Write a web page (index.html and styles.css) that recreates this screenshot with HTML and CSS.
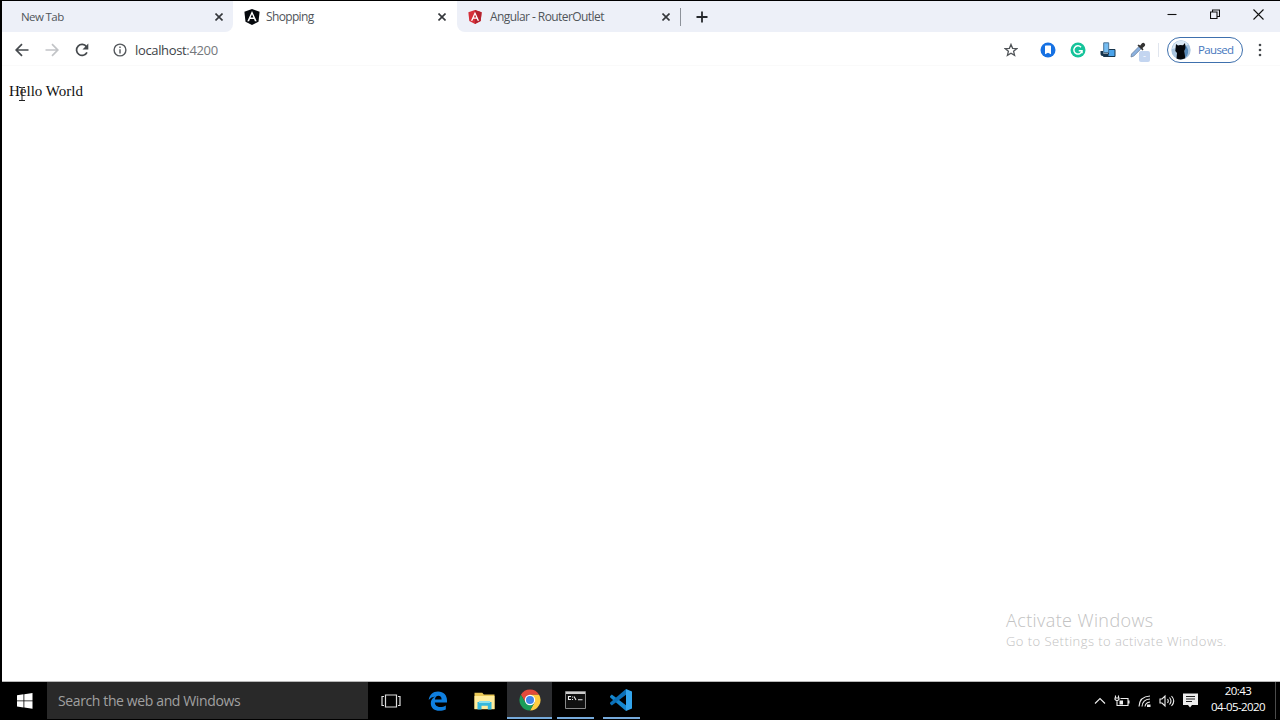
FILE: index.html
```
<!DOCTYPE html>
<html lang="en">
<head>
    <meta charset="UTF-8">
    <meta name="viewport" content="width=device-width, initial-scale=1.0">
    <title>Shopping</title>
    <link rel="stylesheet" href="styles.css">
</head>
<body>
    <div class="browser">
        <div class="tabs">
            <div class="tab tab-first">
                <span class="tab-title title-new">New Tab</span>
                <svg class="close" viewBox="0 0 8 8"><path d="M0.5 0.5l7 7M7.5 0.5l-7 7"/></svg>
            </div>
            <div class="tab tab-active">
                <svg class="favicon" viewBox="0 0 16 16">
                    <path fill="#05080c" d="M8 0l7.600 2.700-1.100 10L8 16l-6.500-3.300L0.400 2.700z"/>
                    <path fill="#fff" fill-rule="evenodd" d="M8 1.900L3.300 12.300h1.800l0.900-2.300h4l0.900 2.300h1.800zM8 5.200l1.400 3.300H6.600z"/>
                </svg>
                <span class="tab-title title-shopping">Shopping</span>
                <svg class="close" viewBox="0 0 8 8"><path d="M0.5 0.5l7 7M7.5 0.5l-7 7"/></svg>
            </div>
            <div class="tab tab-last">
                <svg class="favicon favicon-red" viewBox="0 0 16 16">
                    <path fill="#d6303a" d="M8 0l7.600 2.700-1.100 10L8 16l-6.500-3.300L0.400 2.700z"/>
                    <path fill="#b3232f" d="M8 0l7.600 2.700-1.100 10L8 16z"/>
                    <path fill="#fff" fill-rule="evenodd" d="M8 1.900L3.300 12.300h1.800l0.900-2.300h4l0.900 2.300h1.800zM8 5.200l1.400 3.300H6.600z"/>
                </svg>
                <span class="tab-title title-angular">Angular - RouterOutlet</span>
                <svg class="close" viewBox="0 0 8 8"><path d="M0.5 0.5l7 7M7.5 0.5l-7 7"/></svg>
            </div>
            <div class="tab-divider"></div>
            <svg class="new-tab" viewBox="0 0 12 12"><path d="M6 0.500v11M0.500 6h11"/></svg>
            <div class="window-buttons">
                <svg width="10" height="11" viewBox="0 0 10 11"><path d="M0.500 5.500h9"/></svg>
                <svg width="10" height="11" viewBox="0 0 10 11"><path d="M0.500 3h6.500v6.500h-6.500zM2.500 3V1h7v6.500H7"/></svg>
                <svg width="11" height="11" viewBox="0 0 11 11"><path d="M0.500 0.500l10 10M10.500 0.500l-10 10"/></svg>
            </div>
        </div>

        <div class="toolbar">
            <svg class="nav-icon" viewBox="0 0 14 14"><path d="M13.500 7H1.500M7 1.200L1.200 7 7 12.800"/></svg>
            <svg class="nav-icon disabled" viewBox="0 0 14 14"><path d="M0.500 7h12M7 1.200L12.800 7 7 12.800"/></svg>
            <svg class="nav-icon" viewBox="0 0 14 14">
                <path d="M12 9.300A5.500 5.500 0 1 1 11.500 3.700"/>
                <path class="solid" d="M13.300 0.500v6H7.500z"/>
            </svg>
            <svg class="info" viewBox="0 0 14 14"><circle cx="7" cy="7" r="5.900"/><path d="M7 6.200v4.200M7 3.500v1.500"/></svg>
            <span class="url">localhost<span class="port">:4200</span></span>

            <div class="extensions">
                <svg class="star" viewBox="0 0 14 14"><path d="M7 1.400l1.600 3.900 4.200 0.300-3.200 2.700 1 4.100L7 10.200l-3.600 2.200 1-4.100L1.200 5.600l4.200-0.300z"/></svg>
                <svg width="16" height="16" viewBox="0 0 16 16">
                    <circle cx="8" cy="8" r="7.500" fill="#1671e3"/>
                    <path fill="#fff" d="M5.800 3.500h4.400q0.800 0 0.800 0.800v7.900L8 10.800l-3 1.400V4.300q0-0.800 0.800-0.800z"/>
                </svg>
                <svg width="16" height="16" viewBox="0 0 16 16">
                    <circle cx="8" cy="8" r="7.500" fill="#15c39a"/>
                    <path fill="none" stroke="#fff" stroke-width="1.500" d="M11 5.200A4.100 4.100 0 1 0 12 8.700H8.700M12 8.500v2.800"/>
                </svg>
                <svg width="16" height="16" viewBox="0 0 16 16">
                    <path fill="#4ba3ea" stroke="#17354d" d="M8.500 7.500h6.500v7H3.500V12h5z"/>
                    <path fill="#17354d" d="M0.500 9h3v3h5v2H2.500Q0.500 14 0.500 12z"/>
                    <path fill="#75bdf2" stroke="#4d7698" d="M3.700 0.800h5v9.700h-5z"/>
                </svg>
                <span class="picker">
                    <svg width="16" height="16" viewBox="0 0 16 16">
                        <path fill="#8bb1df" stroke="#617995" stroke-width="0.700" d="M1 15l0.500-3 7.700-7.700 2.200 2.200L3.800 14z"/>
                        <path fill="#333" d="M7.500 3.500l1-1 1.700 1L12 1.200q1.500-1 2.600 0.200t0.200 2.600l-2.300 1.900 1 1.500-1 1z"/>
                    </svg>
                    <span class="picker-badge">-</span>
                </span>
                <span class="separator"></span>
                <span class="profile">
                    <svg class="avatar" viewBox="0 0 20 20">
                        <circle cx="10" cy="10" r="9.700" fill="#a9c5df"/>
                        <path fill="#dbe9f5" d="M1 9Q3 1 10 0.800q5 0 7 4L10 7z"/>
                        <path fill="#5487b7" d="M14 5q5 4 2 11l-3 2z"/>
                        <path fill="#05080c" d="M5 4l2 1.500L9 5l3 0.300L14 3l0.500 5-1.200 3 1 7.300Q10 20.500 5.500 18.500L6 13 4.300 11z"/>
                    </svg>
                    <span>Paused</span>
                </span>
                <svg class="menu" viewBox="0 0 4 14"><circle cx="2" cy="2" r="1.300"/><circle cx="2" cy="7" r="1.300"/><circle cx="2" cy="12" r="1.300"/></svg>
            </div>
        </div>

        <div class="page">
            <p class="hello">Hello World</p>
            <svg class="cursor" viewBox="0 0 8 16"><path d="M1 1.500h2.500l0.500 0.500 0.500-0.500H7M4 2v12M1 14.500h6"/></svg>
            <div class="watermark">
                <div class="watermark-title">Activate Windows</div>
                <div class="watermark-text">Go to Settings to activate Windows.</div>
            </div>
        </div>
    </div>

    <div class="taskbar">
        <div class="start">
            <svg width="16" height="16" viewBox="0 0 16 16"><path fill="#fff" d="M0 2.200l6.500-0.900v6.200H0zM7.300 1.200L15.500 0v7.500H7.300zM0 8.300h6.500v6.200L0 13.600zM7.300 8.300h8.200v7.500l-8.200-1.200z"/></svg>
        </div>
        <div class="search"><span>Search the web and Windows</span></div>
        <div class="task task-view">
            <svg width="20" height="14" viewBox="0 0 20 14"><path fill="none" stroke="#ddd" stroke-width="1.200" d="M4.500 1h11v12h-11zM3 2.500H1v9h2M17 2.500h2v9h-2"/></svg>
        </div>
        <div class="task">
            <svg width="20" height="20" viewBox="0 0 20 20"><path fill="#0f7fdf" d="M0.700 9.100C1.400 3.500 5 0.500 10 0.500c5.700 0 9 3.800 9 9v2H6.800c0.200 3 2.700 4.500 5.500 4.500 2 0 3.900-0.500 5.500-1.500v4c-1.900 1-4 1.300-6.300 1.300-5 0-8.700-2.700-8.700-7.600C2.800 9 4.500 6.800 7 5.400 4.800 5.700 2.300 6.800 0.700 9.100zM6.900 8.400h6.700C13.600 6 12.500 4.700 10.400 4.700c-2 0-3.300 1.700-3.500 3.700z"/></svg>
        </div>
        <div class="task">
            <svg width="21" height="18" viewBox="0 0 21 18">
                <path fill="#e9c856" d="M0.500 0.800h7.800l1.500 1.800h10.700v14.600H0.500z"/>
                <path fill="#ffec9c" d="M0.500 4h20v13H0.500z"/>
                <path fill="#34b8dc" d="M3.500 10h14v7.500h-3.700v-3.700H7.500v3.700h-4z"/>
                <path fill="#8be0ec" d="M5 9h11v2H5z"/>
            </svg>
        </div>
        <div class="task task-chrome">
            <svg width="22" height="22" viewBox="0 0 22 22">
                <path fill="#e34a3b" d="M1.900 5.750A10.500 10.500 0 0 1 20.100 5.750H11L6.500 13.600z"/>
                <path fill="#ffcd40" d="M20.100 5.750A10.500 10.500 0 0 1 11 21.500L15.500 13.600 11 5.750z"/>
                <path fill="#1b9d59" d="M1.900 5.750A10.500 10.500 0 0 0 11 21.500l4.500-7.900h-9z"/>
                <circle cx="11" cy="11" r="5.200" fill="#fff"/><circle cx="11" cy="11" r="4" fill="#4285e8"/>
            </svg>
        </div>
        <div class="task task-running">
            <svg width="21" height="18" viewBox="0 0 21 18">
                <path fill="#111" stroke="#888" d="M0.500 0.500h20v17H0.500z"/>
                <path fill="#ccc" d="M1 1h19v2H1z"/>
                <path fill="none" stroke="#eee" stroke-width="1.100" d="M6 5.500H3.500v3H6M7.500 5.500v1M7.500 8v1M9 5.500l2 3.500M13 8.700h4.500"/>
            </svg>
        </div>
        <div class="task task-running">
            <svg width="22" height="22" viewBox="0 0 22 22">
                <path fill="#1587cf" d="M0 7.200L1.800 5.500 16 16.300V22L0.200 8.500z"/>
                <path fill="#0b70b8" d="M0.200 13.500L16 0v5.700L1.800 16.500 0 14.800z"/>
                <path fill="#33a5ec" d="M16 0l6 2.500v17L16 22z"/>
            </svg>
        </div>

        <div class="tray">
            <svg width="12" height="12" viewBox="0 0 12 12"><path d="M1 8.500l5-5 5 5"/></svg>
            <svg width="16" height="12" viewBox="0 0 16 12"><path d="M1.500 0.500v2M4.500 0.500v2M1 3h4v1.500L3 6 1 4.500zM3 6v4.500h11v-7H6.500M15 5.500v3"/><path class="fill" d="M5.500 5.500h3.500v4H5.500z"/></svg>
            <svg width="13" height="12" viewBox="0 0 13 12"><path d="M1 11.500Q1.500 1.500 12 1M4 11.500Q4.500 4.500 12 4M7 11.500Q7.500 7.500 12 7"/><path class="fill" d="M9 9.500h3.500V12H9z"/></svg>
            <svg width="16" height="14" viewBox="0 0 16 14"><path d="M1 5h2l3-3v10L3 9H1zM8.500 5q1.500 2 0 4M10.500 3.500q3 3.500 0 7M12.500 2q4.500 5 0 10"/></svg>
            <svg width="15" height="15" viewBox="0 0 15 15"><path class="fill" d="M0 0.500h15v11.500H9L7 14.500 5 12H0z"/><path class="note-lines" d="M3 3.500h9M3 6h9M3 8.500h6"/></svg>
        </div>
        <div class="clock">
            <div class="time">20:43</div>
            <div class="date">04-05-2020</div>
        </div>
        <div class="show-desktop"></div>
    </div>
</body>
</html>
```
FILE: styles.css
```
* {
    box-sizing: border-box;
}
body {
    margin: 0;
    width: 1280px;
    height: 720px;
    overflow: hidden;
    background-color: #000;
    font-family: "Open Sans", "Noto Sans", sans-serif;
    font-size: 12px;
    display: flex;
    flex-direction: column;
}
svg {
    display: block;
    flex-shrink: 0;
}
.browser {
    height: 682px;
    padding: 1px 0 0 2px;
    display: flex;
    flex-direction: column;
}

/* tab strip */
.tabs {
    height: 31px;
    background-color: #fff;
    display: flex;
    align-items: stretch;
}
.tab {
    display: flex;
    align-items: center;
    background-color: #edf0f8;
    color: #50555a;
}
.tab-first {
    width: 231px;
    padding: 0 10px 0 19px;
    border-bottom-right-radius: 8px;
}
.tab-active {
    width: 224px;
    padding: 0 11px 0 11px;
    background-color: #fff;
}
.tab-last {
    width: 223px;
    padding: 0 10px 0 11px;
    border-bottom-left-radius: 8px;
}
.tab-title {
    white-space: nowrap;
}
.title-new {
    font-size: 11.5px;
    letter-spacing: -0.6px;
}
.title-shopping {
    margin-left: 6px;
    letter-spacing: -0.65px;
}
.title-angular {
    margin-left: 8px;
    letter-spacing: -0.57px;
}
.favicon {
    width: 16px;
    height: 16px;
}
.favicon-red {
    width: 14px;
    height: 14px;
}
.close {
    width: 8px;
    height: 8px;
    margin-left: auto;
    stroke: #34373b;
    stroke-width: 1.6;
}
.tab-divider {
    width: 16px;
    background: linear-gradient(#8d929a, #8d929a) 0 7px / 1px 18px no-repeat #edf0f8;
}
.new-tab {
    width: 31px;
    height: 31px;
    padding: 10px 19px 9px 0;
    background-color: #edf0f8;
    stroke: #25282c;
    stroke-width: 1.8;
}
.window-buttons {
    flex: 1;
    display: flex;
    justify-content: flex-end;
    gap: 33px;
    padding: 8px 16px 0 0;
    background-color: #edf0f8;
    fill: none;
    stroke: #111;
    stroke-width: 1.1;
}

/* address bar */
.toolbar {
    height: 34px;
    display: flex;
    align-items: center;
    padding: 2px 18px 0 13px;
    background-color: #fff;
    border-bottom: 1px solid #fafafa;
}
.nav-icon {
    width: 14px;
    height: 14px;
    margin-right: 16px;
    fill: none;
    stroke: #45494d;
    stroke-width: 1.7;
}
.nav-icon .solid {
    fill: #45494d;
    stroke: none;
}
.disabled {
    stroke: #c2c4c7;
}
.info {
    width: 14px;
    height: 14px;
    margin: 0 8px 0 8px;
    fill: none;
    stroke: #54585c;
    stroke-width: 1.4;
}
.url {
    color: #3d4247;
    font-size: 13px;
    letter-spacing: -0.35px;
}
.port {
    color: #74787c;
}
.extensions {
    display: flex;
    align-items: center;
    margin-left: auto;
    gap: 14px;
}
.star {
    width: 14px;
    height: 14px;
    margin-right: 8px;
    fill: none;
    stroke: #505458;
    stroke-width: 1.3;
}
.picker {
    position: relative;
}
.picker-badge {
    position: absolute;
    left: 9px;
    top: 9px;
    width: 11px;
    height: 11px;
    border-radius: 2px;
    background-color: #c3d5f0;
    color: #fff;
    font-size: 9px;
    line-height: 9px;
    text-align: center;
}
.separator {
    width: 1px;
    height: 14px;
    margin-right: -6px;
    margin-left: -2px;
    background-color: #e0e5ee;
}
.profile {
    width: 76px;
    height: 26px;
    display: flex;
    align-items: center;
    gap: 7px;
    margin-right: 1px;
    padding-left: 3px;
    border: 1px solid #3e70ad;
    border-radius: 13px;
    color: #4677bd;
    font-size: 11.5px;
    letter-spacing: -0.65px;
}
.avatar {
    width: 20px;
    height: 20px;
}
.menu {
    width: 4px;
    height: 14px;
    fill: #45494d;
}

/* page content */
.page {
    flex: 1;
    position: relative;
    display: flex;
    flex-direction: column;
    justify-content: space-between;
    background-color: #fff;
    border-bottom: 1px solid #b8b8b8;
}
.hello {
    margin: 16px 0 0 7px;
    font-family: "Liberation Serif", serif;
    font-size: 15px;
    line-height: 18px;
    color: #111;
}
.cursor {
    position: absolute;
    left: 16px;
    top: 20px;
    width: 8px;
    height: 16px;
    fill: none;
    stroke: #222;
    stroke-width: 1;
}
.watermark {
    align-self: flex-end;
    width: 274px;
    height: 72px;
    color: #c2c2c2;
    white-space: nowrap;
}
.watermark-title {
    font-size: 18px;
    line-height: 22px;
    font-weight: 300;
    letter-spacing: 0.4px;
}
.watermark-text {
    font-size: 13px;
    line-height: 20px;
    font-weight: 300;
    letter-spacing: 0.45px;
}

/* taskbar */
.taskbar {
    height: 38px;
    display: flex;
    padding-bottom: 1px;
    color: #fff;
}
.start {
    width: 47px;
    display: flex;
    align-items: center;
    padding-left: 17px;
}
.search {
    width: 321px;
    display: flex;
    align-items: center;
    padding-left: 11px;
    background-color: #292929;
    color: #a0a0a0;
    font-size: 14px;
    letter-spacing: -0.38px;
}
.task {
    width: 46px;
    display: flex;
    align-items: center;
    justify-content: center;
}
.task-view {
    width: 47px;
    padding-right: 1px;
}
.task-chrome {
    width: 45px;
    background-color: #2c2d30;
    border-bottom: 2px solid #76aadb;
}
.task-running {
    width: 37px;
    margin-left: 5px;
    padding-right: 1px;
    border-bottom: 2px solid #76aadb;
}
.task-running + .task-running {
    margin-left: 9px;
}
.tray {
    display: flex;
    align-items: center;
    gap: 8px;
    margin-left: auto;
    fill: none;
    stroke: #eee;
    stroke-width: 1.1;
}
.tray .fill {
    fill: #eee;
    stroke: none;
}
.tray .note-lines {
    stroke: #222;
}
.clock {
    width: 77px;
    text-align: center;
    font-size: 11.5px;
    line-height: 16px;
    padding: 1px 0 0 3px;
    letter-spacing: -0.6px;
}
.show-desktop {
    width: 5px;
    border-left: 1px solid #4b4b4b;
}
```
